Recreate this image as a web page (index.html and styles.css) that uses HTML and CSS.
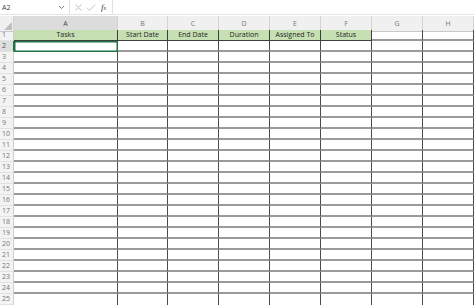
FILE: index.html
```html
<!DOCTYPE html>
<html lang="en">
<head>
    <meta charset="UTF-8">
    <title>Task Sheet</title>
    <link rel="stylesheet" href="styles.css">
</head>
<body>
    <!-- 数式バー -->
    <div class="formula-bar">
        <div class="name-box">
            <span>A2</span>
            <svg class="chevron" width="7" height="5" viewBox="0 0 7 5"><path d="M1 1 L3.5 3.5 L6 1" fill="none" stroke="#666" stroke-width="0.9"/></svg>
        </div>
        <div class="fx-buttons">
            <svg width="9" height="9" viewBox="0 0 9 9"><path d="M1.5 1.5 L7.5 7.5 M7.5 1.5 L1.5 7.5" stroke="#bbb" stroke-width="0.9"/></svg>
            <svg width="10" height="9" viewBox="0 0 10 9"><path d="M1 4.8 L3.6 7.4 L9 1.6" fill="none" stroke="#bbb" stroke-width="0.9"/></svg>
            <span class="fx">f<small>x</small></span>
        </div>
        <div class="formula-input"></div>
    </div>

    <div class="sheet">
        <div class="row col-head">
            <div class="corner"></div>
            <div class="active">A</div><div>B</div><div>C</div><div>D</div><div>E</div><div>F</div><div>G</div><div>H</div>
        </div>
        <div class="row title-row">
            <div class="num">1</div>
            <div class="t">Tasks</div><div class="t">Start Date</div><div class="t">End Date</div><div class="t">Duration</div><div class="t">Assigned To</div><div class="t">Status</div><div></div><div></div>
        </div>
        <div class="row"><div class="num active">2</div><div class="selected"></div><div></div><div></div><div></div><div></div><div></div><div></div><div></div></div>
        <div class="row"><div class="num">3</div><div></div><div></div><div></div><div></div><div></div><div></div><div></div><div></div></div>
        <div class="row"><div class="num">4</div><div></div><div></div><div></div><div></div><div></div><div></div><div></div><div></div></div>
        <div class="row"><div class="num">5</div><div></div><div></div><div></div><div></div><div></div><div></div><div></div><div></div></div>
        <div class="row"><div class="num">6</div><div></div><div></div><div></div><div></div><div></div><div></div><div></div><div></div></div>
        <div class="row"><div class="num">7</div><div></div><div></div><div></div><div></div><div></div><div></div><div></div><div></div></div>
        <div class="row"><div class="num">8</div><div></div><div></div><div></div><div></div><div></div><div></div><div></div><div></div></div>
        <div class="row"><div class="num">9</div><div></div><div></div><div></div><div></div><div></div><div></div><div></div><div></div></div>
        <div class="row"><div class="num">10</div><div></div><div></div><div></div><div></div><div></div><div></div><div></div><div></div></div>
        <div class="row"><div class="num">11</div><div></div><div></div><div></div><div></div><div></div><div></div><div></div><div></div></div>
        <div class="row"><div class="num">12</div><div></div><div></div><div></div><div></div><div></div><div></div><div></div><div></div></div>
        <div class="row"><div class="num">13</div><div></div><div></div><div></div><div></div><div></div><div></div><div></div><div></div></div>
        <div class="row"><div class="num">14</div><div></div><div></div><div></div><div></div><div></div><div></div><div></div><div></div></div>
        <div class="row"><div class="num">15</div><div></div><div></div><div></div><div></div><div></div><div></div><div></div><div></div></div>
        <div class="row"><div class="num">16</div><div></div><div></div><div></div><div></div><div></div><div></div><div></div><div></div></div>
        <div class="row"><div class="num">17</div><div></div><div></div><div></div><div></div><div></div><div></div><div></div><div></div></div>
        <div class="row"><div class="num">18</div><div></div><div></div><div></div><div></div><div></div><div></div><div></div><div></div></div>
        <div class="row"><div class="num">19</div><div></div><div></div><div></div><div></div><div></div><div></div><div></div><div></div></div>
        <div class="row"><div class="num">20</div><div></div><div></div><div></div><div></div><div></div><div></div><div></div><div></div></div>
        <div class="row"><div class="num">21</div><div></div><div></div><div></div><div></div><div></div><div></div><div></div><div></div></div>
        <div class="row"><div class="num">22</div><div></div><div></div><div></div><div></div><div></div><div></div><div></div><div></div></div>
        <div class="row"><div class="num">23</div><div></div><div></div><div></div><div></div><div></div><div></div><div></div><div></div></div>
        <div class="row"><div class="num">24</div><div></div><div></div><div></div><div></div><div></div><div></div><div></div><div></div></div>
        <div class="row last"><div class="num">25</div><div></div><div></div><div></div><div></div><div></div><div></div><div></div><div></div></div>
    </div>
</body>
</html>
```

FILE: styles.css
```css
/* 基本設定 */
body {
    margin: 0;
    padding: 0;
    background-color: #ffffff;
    font-family: "Open Sans", "Liberation Sans", Arial, sans-serif;
    font-size: 7px;
    color: #222;
    overflow: hidden;
}

/* 数式バー */
.formula-bar {
    height: 14px;
    display: flex;
    align-items: stretch;
    border-bottom: 1px solid #e4e4e4;
    margin-bottom: 1px;
}
.name-box {
    width: 70px;
    display: flex;
    align-items: center;
    justify-content: space-between;
    padding: 0 4px 0 2px;
    box-sizing: border-box;
    color: #444;
    border-right: 1px solid #e0e0e0;
}
.fx-buttons {
    width: 43px;
    display: flex;
    align-items: center;
    gap: 3px;
    padding-left: 4px;
    box-sizing: border-box;
    border-right: 1px solid #e0e0e0;
}
.fx {
    font-family: "Liberation Serif", serif;
    font-style: italic;
    font-size: 9px;
    color: #444;
    margin-left: 2px;
}
.fx small {
    font-size: 6px;
}
.formula-input {
    flex: 1;
}

/* シート本体 */
.row {
    display: grid;
    grid-template-columns: 14px 104px 50px 51px 51px 51px 51px 51px 51px;
    height: 11px;
}
.row > div {
    box-sizing: border-box;
    border-right: 1px solid #4a4a4a;
    border-bottom: 2px solid #9a9a9a;
}
.row > .num {
    background-color: #f3f3f3;
    color: #777;
    font-size: 7px;
    line-height: 10px;
    padding-left: 2px;
    border-right: 1px solid #cfcfcf;
    border-bottom: 1px solid #e2e2e2;
}
.row > .num.active {
    background-color: #dedede;
    color: #555;
    border-right: 1px solid #217346;
}

/* 列見出し */
.col-head {
    height: 14px;
}
.col-head > div {
    background-color: #f0f0f0;
    color: #777;
    text-align: center;
    line-height: 15px;
    font-size: 7px;
    border-right: 1px solid #d4d4d4;
    border-bottom: 1px solid #c8c8c8;
}
.col-head > .active {
    background-color: #dcdcdc;
    color: #444;
    border-bottom: 1px solid #217346;
}
.col-head > .corner {
    position: relative;
}
.col-head > .corner::after {
    content: "";
    position: absolute;
    right: 1px;
    bottom: 1px;
    border-left: 8px solid transparent;
    border-bottom: 8px solid #bdbdbd;
}

/* 見出し行（緑） */
.title-row > .t {
    background-color: #c6e0b4;
    text-align: center;
    line-height: 10px;
    font-size: 7px;
    color: #1f1f1f;
    border-right: 1px solid #3e3e3e;
    border-bottom: 1px solid #3e3e3e;
}

/* 選択セル */
.row > .selected {
    border: 1px solid #217346;
    box-shadow: inset 0 0 0 0.5px #217346;
}
.last > div {
    border-bottom: none;
}
```
